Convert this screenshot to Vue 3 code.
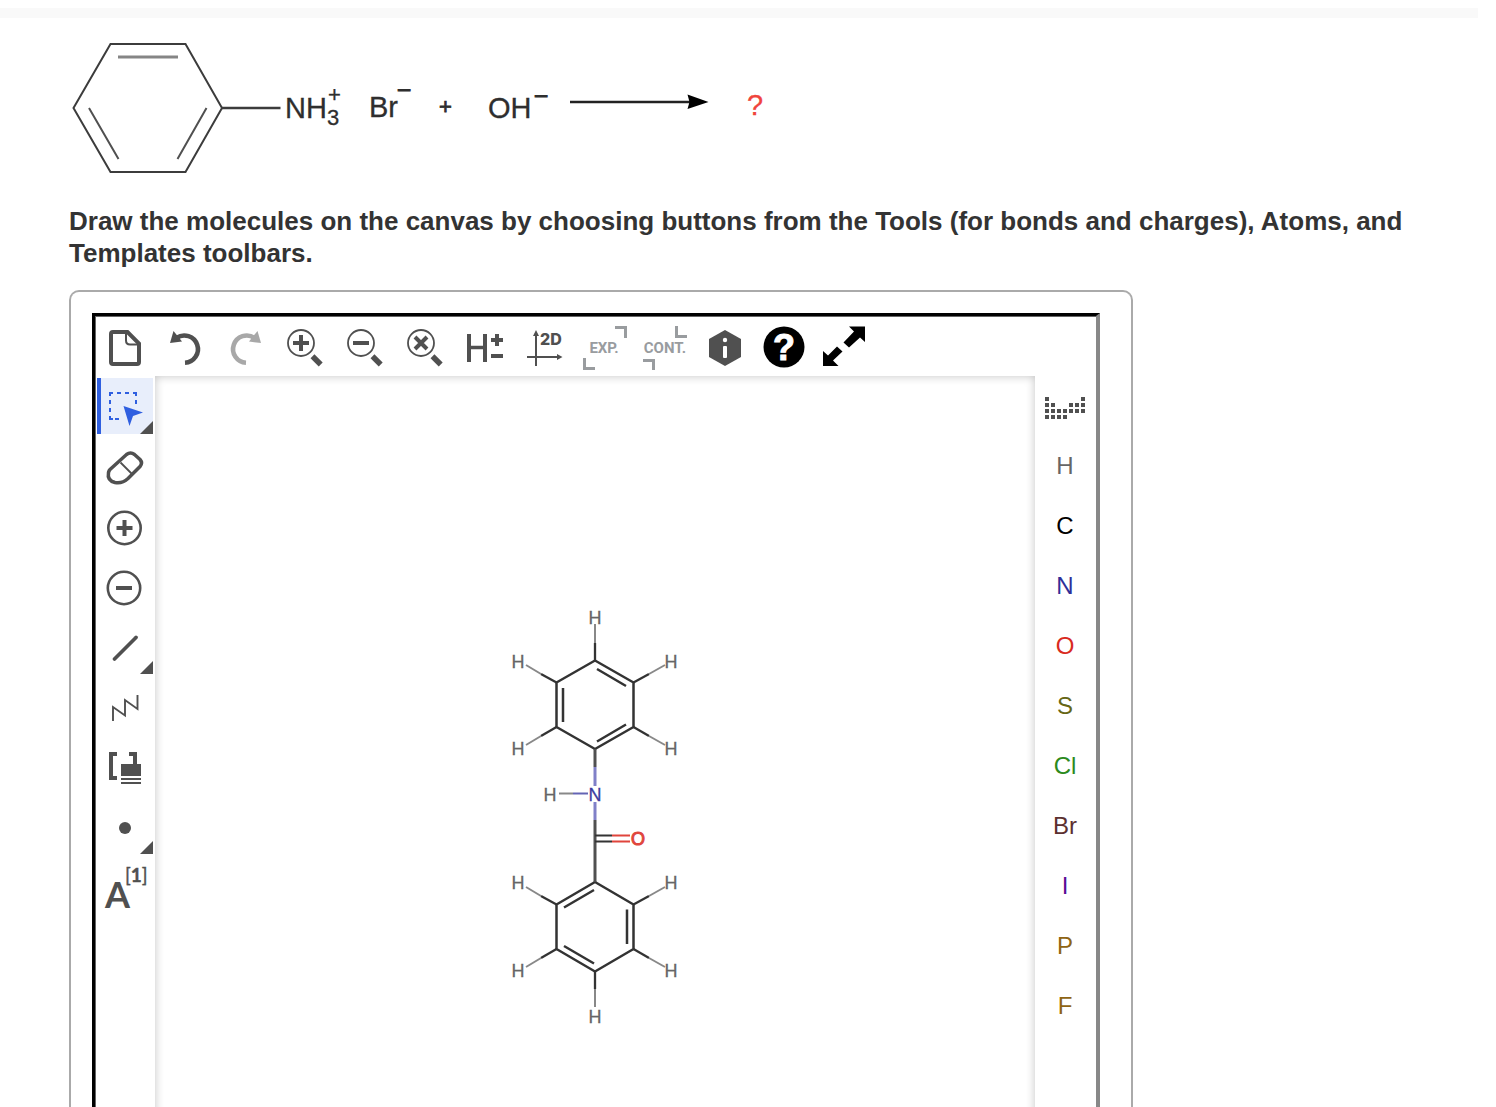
<script setup>
const elements = [
  { symbol: 'H', name: 'Hydrogen', color: '#666666' },
  { symbol: 'C', name: 'Carbon', color: '#000000' },
  { symbol: 'N', name: 'Nitrogen', color: '#2f2f99' },
  { symbol: 'O', name: 'Oxygen', color: '#d92a1e' },
  { symbol: 'S', name: 'Sulfur', color: '#666614' },
  { symbol: 'Cl', name: 'Chlorine', color: '#2c8a1c' },
  { symbol: 'Br', name: 'Bromine', color: '#5c3030' },
  { symbol: 'I', name: 'Iodine', color: '#5a0c94' },
  { symbol: 'P', name: 'Phosphorus', color: '#8f6414' },
  { symbol: 'F', name: 'Fluorine', color: '#8f6414' }
]

// Filled cells of the periodic table icon, one string per row
const tableRows = ['X.....X', 'XX..XXX', 'XXXXXXX', 'XXXX...']
const tableCells = tableRows.flatMap((row, r) =>
  [...row].map((c, i) => ({ c, x: 8 + i * 6, y: 19 + r * 6 })).filter((cell) => cell.c === 'X')
)

// Hydrogen atoms: label centre, carbon end, bond midpoint, label end
const hydrogens = [
  { x: 95, y: 18, c: [95, 61], m: [95, 43], e: [95, 24] },
  { x: 18, y: 62, c: [56.5, 82.5], m: [41, 74], e: [26, 65] },
  { x: 171, y: 62, c: [133.5, 82.5], m: [149, 74], e: [165, 65] },
  { x: 18, y: 149, c: [56.5, 127], m: [41, 136], e: [26, 145] },
  { x: 171, y: 149, c: [133.5, 127], m: [149, 136], e: [165, 145] },
  { x: 18, y: 283, c: [56.5, 304.5], m: [41, 296], e: [26, 287] },
  { x: 171, y: 283, c: [133.5, 304.5], m: [149, 296], e: [165, 287] },
  { x: 18, y: 371, c: [56.5, 349], m: [41, 358], e: [26, 367] },
  { x: 171, y: 371, c: [133.5, 349], m: [149, 358], e: [165, 367] },
  { x: 95, y: 417, c: [95, 371.5], m: [95, 389], e: [95, 407] }
]
</script>

<template>
  <div class="page">
    <div class="strip"></div>
    <main class="content">
      <svg class="equation" width="711" height="140" viewBox="69 38 711 140" role="img" aria-label="Anilinium bromide plus hydroxide reaction">
        <g fill="none" stroke="#3c3c3c" stroke-width="2">
          <path d="M73.500 108 110.500 44H185.500L222 108 185.500 172H110.500Z" />
          <path d="M222 108H280.500" stroke-width="2.300" />
          <path d="M89 108 118.500 159M206.500 108 177.500 159" stroke="#505050" />
          <path d="M118 57H178" stroke="#858585" stroke-width="3" />
        </g>
        <g class="formula">
          <text x="285" y="118">NH</text>
          <text x="327" y="125" class="small">3</text>
          <text x="328" y="102" class="small">+</text>
          <text x="369" y="117">Br</text>
          <text x="398" y="96" class="small sign">–</text>
          <text x="439" y="114" class="small sign">+</text>
          <text x="488" y="118">OH</text>
          <text x="535" y="102" class="small sign">–</text>
          <text x="747" y="115" class="unknown">?</text>
        </g>
        <path d="M570 102H692" stroke="#222" stroke-width="2.500" fill="none" />
        <path d="M687.500 94.500 708.500 102 687.500 109 689.500 102Z" fill="#000" />
      </svg>

      <p class="instructions">
        Draw the molecules on the canvas by choosing buttons from the Tools (for bonds and charges), Atoms, and Templates toolbars.
      </p>

      <section class="frame">
        <div class="editor">
          <div class="toolbar">
            <button aria-label="New document">
              <svg viewBox="0 0 56 56" class="line">
                <path d="M16 14H30.500L42 25.500V44a2 2 0 0 1-2 2H16a2 2 0 0 1-2-2V16a2 2 0 0 1 2-2Z" stroke-width="4" />
                <path d="M29 14v8.500q0 4 4 4h9" stroke-width="2" />
              </svg>
            </button>
            <button aria-label="Undo">
              <svg viewBox="0 0 56 56">
                <path d="M19.500 20A13.600 13.600 0 1 1 28 44.700" class="line" stroke-width="4.600" />
                <path d="M16.500 13 13 25 25 23.500Z" />
              </svg>
            </button>
            <button aria-label="Redo" class="faded">
              <svg viewBox="0 0 56 56">
                <g transform="translate(57 0) scale(-1 1)">
                  <path d="M19.500 20A13.600 13.600 0 1 1 28 44.700" class="line" stroke-width="4.600" />
                  <path d="M16.500 13 13 25 25 23.500Z" />
                </g>
              </svg>
            </button>
            <button aria-label="Zoom in">
              <svg viewBox="0 0 56 56" class="line">
                <circle cx="24" cy="25" r="13" stroke-width="1.800" />
                <path d="M16 25H32M24 17V33" stroke-width="4" />
                <path d="M35.500 38.200 43.700 46.500" stroke-width="5.500" />
              </svg>
            </button>
            <button aria-label="Zoom out">
              <svg viewBox="0 0 56 56" class="line">
                <circle cx="24" cy="25" r="13" stroke-width="1.800" />
                <path d="M16 25H32" stroke-width="4" />
                <path d="M35.500 38.200 43.700 46.500" stroke-width="5.500" />
              </svg>
            </button>
            <button aria-label="Reset zoom">
              <svg viewBox="0 0 56 56" class="line">
                <circle cx="24" cy="25" r="13" stroke-width="1.800" />
                <path d="M18 19 30 31M30 19 18 31" stroke-width="4" />
                <path d="M35.500 38.200 43.700 46.500" stroke-width="5.500" />
              </svg>
            </button>
            <button aria-label="Toggle hydrogens">
              <svg viewBox="0 0 56 56" class="line">
                <path d="M12 16V44M28 16V44" stroke-width="4" />
                <path d="M12 29.500H28" stroke-width="3.500" />
                <path d="M34 22H46M40 16V28M34 38H46" stroke-width="4" />
              </svg>
            </button>
            <button aria-label="Clean 2D">
              <svg viewBox="0 0 56 56">
                <path d="M19 16V48M10 39H42" class="line" stroke-width="2" />
                <path d="M19 12 22 18H16ZM45.500 39 40 36V42Z" />
                <text x="23" y="27" class="label-2d">2D</text>
              </svg>
            </button>
            <button aria-label="Expand groups" class="muted">
              <svg viewBox="0 0 56 56">
                <path d="M38 9.500H48.500V20M7.500 40V50.500H18" class="line" stroke-width="3" />
                <text x="27" y="35" class="label-group">EXP.</text>
              </svg>
            </button>
            <button aria-label="Contract groups" class="muted">
              <svg viewBox="0 0 56 56">
                <path d="M39.500 8V18.500H50M6 42.500H16.500V52" class="line" stroke-width="3" />
                <text x="28" y="35" class="label-group">CONT.</text>
              </svg>
            </button>
            <button aria-label="Information">
              <svg viewBox="0 0 56 56">
                <path d="M28 12 44 21V39L28 48 12 39V21Z" />
                <circle cx="28" cy="22" r="2.200" fill="#fff" />
                <rect x="26" y="28" width="4" height="12" rx="1" fill="#fff" />
              </svg>
            </button>
            <button aria-label="Help" class="black">
              <svg viewBox="0 0 56 56">
                <circle cx="27" cy="29" r="20.500" />
                <text x="27" y="42" class="label-help">?</text>
              </svg>
            </button>
            <button aria-label="Full screen" class="black">
              <svg viewBox="0 0 56 56">
                <path d="M32 8.500H48V24L43 19.500 32 29.500 26.500 24.500 37 13.500ZM6 33 11 37.500 20 28.500 25.500 33.500 16 42.500 21.500 48H6Z" />
              </svg>
            </button>
          </div>

          <div class="workspace">
            <div class="side">
              <button aria-label="Select" class="selected">
                <svg viewBox="0 0 56 56">
                  <g class="line" stroke-width="2" stroke-dasharray="4 4">
                    <path d="M12 15H40" /><path d="M13 14V42" /><path d="M39 14V26" />
                    <path d="M12 41H22" stroke-dasharray="4 2" />
                  </g>
                  <path d="M26.500 28 46 34.500 36 38 32.500 48Z" />
                  <path d="M43 56H56V43Z" fill="#505050" />
                </svg>
              </button>
              <button aria-label="Erase">
                <svg viewBox="0 0 56 56" class="line">
                  <path d="M13 31.500 29.500 16.500Q33.500 13.500 37.500 16.500L43 21.500Q46 25 43 28.500L31 40.500Q25 46 18 44.500 10 42.500 11.500 34.500 12 32.500 13 31.500Z" stroke-width="3.500" />
                  <path d="M23.500 24.500 34.500 35.500" stroke-width="1.800" />
                </svg>
              </button>
              <button aria-label="Increase charge">
                <svg viewBox="0 0 56 56" class="line">
                  <circle cx="27.500" cy="30" r="16.200" stroke-width="2.600" />
                  <path d="M19.500 30H35.500M27.500 22V38" stroke-width="4" />
                </svg>
              </button>
              <button aria-label="Decrease charge">
                <svg viewBox="0 0 56 56" class="line">
                  <circle cx="27" cy="30" r="16.200" stroke-width="2.600" />
                  <path d="M19 30H35" stroke-width="4" />
                </svg>
              </button>
              <button aria-label="Single bond">
                <svg viewBox="0 0 56 56">
                  <path d="M17.500 41 39 19.500" class="line" stroke-width="3.800" stroke-linecap="round" />
                  <path d="M43 56H56V43Z" />
                </svg>
              </button>
              <button aria-label="Chain">
                <svg viewBox="0 0 56 56" class="line">
                  <path d="M16 43V29L28 37.500V22L40.500 31V17" stroke-width="1.900" />
                </svg>
              </button>
              <button aria-label="Brackets">
                <svg viewBox="0 0 56 56">
                  <path d="M20 16H14V40H20M32 16H38V26" class="line" stroke-width="4" />
                  <path d="M24 26H44V38H24ZM24 40H44V42H24ZM24 44H44V46H24Z" />
                </svg>
              </button>
              <button aria-label="Radical">
                <svg viewBox="0 0 56 56">
                  <circle cx="28" cy="30" r="6" />
                  <path d="M43 56H56V43Z" />
                </svg>
              </button>
              <button aria-label="Atom map">
                <svg viewBox="0 0 56 56">
                  <text x="8" y="50" class="label-atom">A</text>
                  <text x="28" y="24" class="label-map">[<tspan class="bold">1</tspan>]</text>
                </svg>
              </button>
            </div>

            <div class="canvas">
              <svg class="molecule" width="190" height="440" viewBox="0 0 190 440" role="img" aria-label="Benzanilide">
                <g fill="none" stroke="#333" stroke-width="2.500" stroke-linejoin="round">
                  <path d="M95 60.500 133.500 82.500V127L95 149 56.500 127V82.500Z" />
                  <path d="M97 69 126 86M126 124.500 97 141.500M63 88V122" />
                  <path d="M95 282 133.500 304.500V349L95 371.500 56.500 349V304.500Z" />
                  <path d="M94 290 64 307.500M64 346 94 363.500M127 309.500V344" />
                  <path d="M95 149V167M95 220V282" stroke="#505050" stroke-width="3" />
                  <path d="M95 235.500H112M95 241.500H112" stroke-width="2" />
                  <path d="M112 235.500H130M112 241.500H130" stroke="#e0453c" stroke-width="2" />
                  <path d="M95 167V186M95 202V220" stroke="#8080c8" stroke-width="3" />
                  <path d="M88 193.500H73" stroke="#6464b4" stroke-width="2" />
                  <path d="M73 193.500H59" stroke="#888" stroke-width="2" />
                </g>
                <g v-for="h in hydrogens" :key="h.x + '-' + h.y">
                  <path :d="`M${h.c}L${h.m}`" stroke="#333" stroke-width="2.300" />
                  <path :d="`M${h.m}L${h.e}`" stroke="#888" stroke-width="2" />
                  <text :x="h.x" :y="h.y + 6" class="atom">H</text>
                </g>
                <text x="50" y="201" class="atom">H</text>
                <text x="95" y="201" class="atom nitrogen">N</text>
                <text x="138" y="245" class="atom oxygen">O</text>
              </svg>
            </div>

            <div class="side atoms">
              <button aria-label="Periodic table">
                <svg viewBox="0 0 56 56">
                  <rect v-for="cell in tableCells" :key="cell.x + '-' + cell.y" :x="cell.x" :y="cell.y" width="4" height="4" />
                </svg>
              </button>
              <button v-for="el in elements" :key="el.symbol" class="element" :title="el.name" :style="{ color: el.color }">{{ el.symbol }}</button>
            </div>
          </div>
        </div>
      </section>
    </main>
  </div>
</template>

<style>
body {
  margin: 0;
  background: #fff;
}
</style>

<style scoped>
.page {
  box-sizing: border-box;
  min-height: 100vh;
  padding-top: 8px;
  display: flex;
  flex-direction: column;
  overflow: clip;
  font-family: "Liberation Sans", Arial, sans-serif;
}

.strip {
  height: 10px;
  margin-right: 18px;
  background: #f9f9f9;
}

.content {
  flex: 1;
  display: flex;
  flex-direction: column;
  padding: 20px 60px 0 69px;
}

.equation {
  display: block;
  flex: none;
}

.formula {
  font-size: 29px;
  fill: #2e2e2e;
  stroke: #2e2e2e;
  stroke-width: 0.3px;
}

.small {
  font-size: 22px;
}

.sign {
  stroke-width: 0.8px;
}

.unknown {
  fill: #f0443c;
  stroke: #f0443c;
}

.instructions {
  margin: 27px 0 21px;
  font-size: 26px;
  line-height: 32px;
  font-weight: bold;
  color: #333;
}

.frame {
  box-sizing: border-box;
  flex: 1;
  display: flex;
  width: 100%;
  max-width: 1064px;
  padding: 21px 31px 0 21px;
  border: 2px solid #aaa;
  border-bottom: 0;
  border-radius: 10px 10px 0 0;
}

.editor {
  flex: 1;
  display: flex;
  flex-direction: column;
  border: solid #000;
  border-width: 3px 4px 0 3px;
  border-right-color: #888;
  box-shadow: inset 1px 1px 0 #666;
}

.toolbar {
  display: flex;
  gap: 4px;
  padding: 2px;
}

.workspace {
  flex: 1;
  display: flex;
}

.side {
  display: flex;
  flex-direction: column;
  gap: 4px;
  padding: 2px;
}

.atoms {
  padding-right: 3px;
}

.canvas {
  flex: 1;
  display: flex;
  justify-content: center;
  align-items: flex-start;
  margin-bottom: -16px;
  padding-top: 224px;
  box-shadow: inset 0 0 10px rgba(0, 0, 0, 0.24);
}

button {
  display: block;
  flex: none;
  width: 56px;
  height: 56px;
  padding: 0;
  border: 0;
  background: none;
  color: #505050;
  font: inherit;
}

button svg {
  display: block;
  width: 56px;
  height: 56px;
  overflow: visible;
  fill: currentColor;
}

button .line,
button svg.line {
  fill: none;
  stroke: currentColor;
}

.faded {
  color: #a8a8a8;
}

.muted {
  color: #999c9f;
}

.black {
  color: #000;
}

.selected {
  color: #2f5fe0;
  background: #e8eefb;
  box-shadow: inset 4px 0 0 #2f5fe0;
}

.element {
  font-size: 24px;
}

.label-2d {
  font: 800 16px Inter, sans-serif;
}

.label-group {
  font: bold 15px Roboto, sans-serif;
  text-anchor: middle;
}

.label-help {
  font-size: 36px;
  font-weight: bold;
  fill: #fff;
  stroke: #fff;
  stroke-width: 1px;
  text-anchor: middle;
}

.label-atom {
  font: bold 36px Lato, sans-serif;
}

.label-map {
  font: 19px Lato, sans-serif;
  stroke: currentColor;
  stroke-width: 0.4px;
}

.bold {
  font-weight: bold;
}

.atom {
  font-size: 18px;
  fill: #666;
  stroke: #666;
  stroke-width: 0.3px;
  text-anchor: middle;
}

.nitrogen {
  fill: #3c3ca0;
  stroke: #3c3ca0;
}

.oxygen {
  fill: #e0453c;
  stroke: #e0453c;
  stroke-width: 1px;
}
</style>
